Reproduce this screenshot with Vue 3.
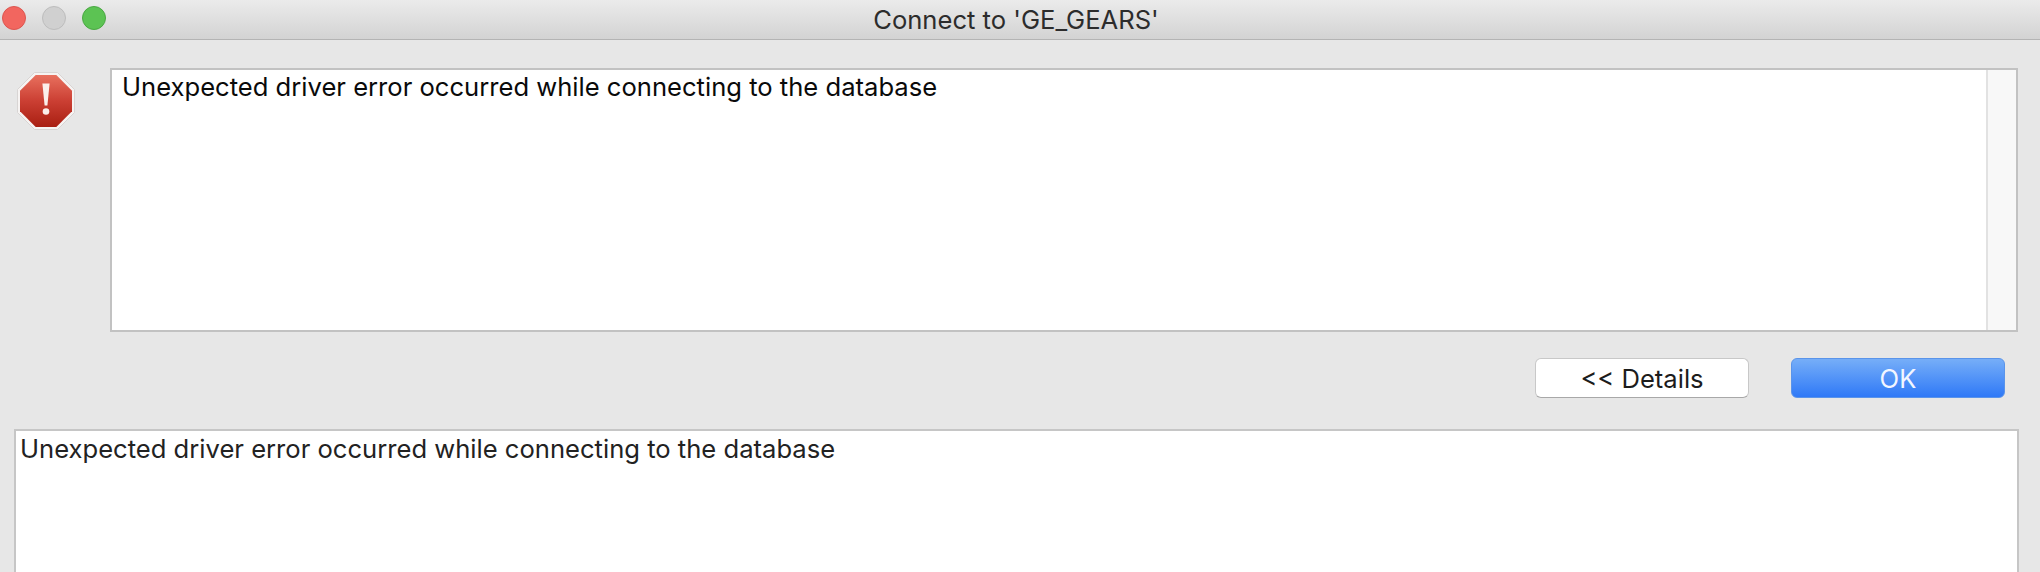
<template>
  <div class="dialog">
    <header class="titlebar">
      <div class="lights">
        <span class="light close"></span>
        <span class="light mini"></span>
        <span class="light zoom"></span>
      </div>
      <div class="title">Connect to 'GE_GEARS'</div>
    </header>

    <section class="message-row">
      <svg class="stop-icon" width="58" height="58" viewBox="0 0 58 58">
        <defs>
          <linearGradient id="stopFill" x1="0" y1="0" x2="0" y2="1">
            <stop offset="0" stop-color="#e8705e" />
            <stop offset="0.5" stop-color="#cb3f33" />
            <stop offset="1" stop-color="#a91f12" />
          </linearGradient>
        </defs>
        <polygon points="17.5,0.5 40.5,0.5 57.5,17.5 57.5,40.5 40.5,57.5 17.5,57.5 0.5,40.5 0.5,17.5" fill="#f6f3f2" stroke="#d8d5d4" stroke-width="1" />
        <polygon points="18.7,3 39.3,3 55,18.7 55,39.3 39.3,55 18.7,55 3,39.3 3,18.7" fill="url(#stopFill)" />
        <path d="M25.4 11.5 L32.6 11.5 L30.4 33.5 L27.6 33.5 Z" fill="#fbeeea" />
        <circle cx="29" cy="39.5" r="3.3" fill="#fbeeea" />
      </svg>
      <div class="message-box">
        <div class="message-text">{{ message }}</div>
        <div class="scroll-track"></div>
      </div>
    </section>

    <section class="buttons">
      <button class="btn details">&lt;&lt; Details</button>
      <button class="btn ok">OK</button>
    </section>

    <section class="details-box">{{ message }}</section>
  </div>
</template>

<script setup>
const message = 'Unexpected driver error occurred while connecting to the database'
</script>

<style>
html, body {
  margin: 0;
  background: #e7e7e7;
  overflow: hidden;
}
</style>

<style scoped>
.dialog {
  width: 2040px;
  height: 572px;
  overflow: hidden;
  background: #e7e7e7;
  font-family: Inter, "Liberation Sans", Arial, sans-serif;
  color: #1c1c1c;
}

.titlebar {
  position: relative;
  height: 39px;
  padding-right: 8px;
  display: flex;
  align-items: center;
  justify-content: center;
  background: linear-gradient(#ebebeb, #d3d3d3);
  border-bottom: 1px solid #b4b4b4;
}

.lights {
  position: absolute;
  left: 2px;
  top: 6px;
  display: flex;
  gap: 16px;
}

.light {
  width: 24px;
  height: 24px;
  border-radius: 50%;
  box-sizing: border-box;
}
.light.close {
  background: #f2665f;
  border: 1px solid #dc5650;
}
.light.mini {
  background: #d0d0d0;
  border: 1px solid #bdbdbd;
}
.light.zoom {
  background: #5cc353;
  border: 1px solid #4aa843;
}

.title {
  font-size: 25.6px;
  color: #2c2c2c;
}

.message-row {
  display: flex;
  align-items: flex-start;
  padding: 28px 22px 0 17px;
}

.stop-icon {
  flex: none;
  margin: 4px 35px 0 0;
}

.message-box {
  flex: 1;
  height: 264px;
  box-sizing: border-box;
  display: flex;
  background: #fff;
  border: 2px solid #c2c2c2;
}

.message-text {
  flex: 1;
  padding: 2px 10px;
  font-size: 25.6px;
  line-height: 30px;
  color: #0a0a0a;
}

.scroll-track {
  width: 28px;
  background: #f8f8f8;
  border-left: 2px solid #e2e2e2;
}

.buttons {
  display: flex;
  justify-content: flex-end;
  gap: 42px;
  padding: 26px 35px 0 0;
}

.btn {
  width: 214px;
  height: 40px;
  padding: 0;
  box-sizing: border-box;
  border-radius: 6px;
  font-family: inherit;
  font-size: 25.6px;
}

.btn.details {
  background: #fff;
  color: #1c1c1c;
  border: 1px solid #c8c8c8;
  border-bottom-color: #a8a8a8;
}

.btn.ok {
  background: linear-gradient(#76aef8, #2f79f7);
  color: #f2f6ff;
  border: 1px solid #5a94ea;
}

.details-box {
  margin: 31px 21px 0 14px;
  height: 200px;
  box-sizing: border-box;
  padding: 3px 4px;
  background: #fff;
  border: 2px solid #c6c6c6;
  font-size: 25.6px;
  line-height: 30px;
  color: #222;
}
</style>
